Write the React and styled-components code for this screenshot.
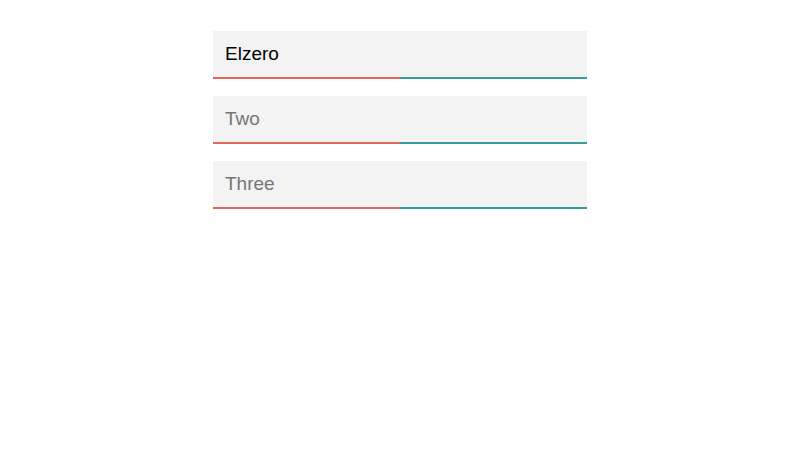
import React from 'react';
import styled, { createGlobalStyle } from 'styled-components';

const GlobalStyle = createGlobalStyle`
  html, body {
    margin: 0;
    min-height: 100%;
    background: #fff;
    font-family: "Liberation Sans", Arial, sans-serif;
  }
`;

const Form = styled.form`
  width: 374px;
  margin: 0 auto;
  padding: 31px 0 40px;
  display: flex;
  flex-direction: column;
  gap: 18px;
`;

const Field = styled.div`
  position: relative;
  display: flex;

  &::before,
  &::after {
    content: '';
    position: absolute;
    bottom: -1px;
    height: 2px;
    width: 50%;
  }

  &::before {
    left: 0;
    background: #de6a5a;
  }

  &::after {
    right: 0;
    background: #3a9b98;
  }
`;

const Input = styled.input`
  flex: 1;
  height: 47px;
  box-sizing: border-box;
  border: none;
  outline: none;
  background: #f3f3f3;
  padding: 0 12px 1px;
  font-family: "Liberation Sans", Arial, sans-serif;
  font-size: 19px;
  color: #000;

  &::placeholder {
    color: #757575;
  }
`;

const fields = [
  { id: 'one', placeholder: 'One', value: 'Elzero' },
  { id: 'two', placeholder: 'Two' },
  { id: 'three', placeholder: 'Three' },
];

export default function App() {
  return (
    <>
      <GlobalStyle />
      <Form>
        {fields.map((f) => (
          <Field key={f.id}>
            <Input type="text" placeholder={f.placeholder} defaultValue={f.value} />
          </Field>
        ))}
      </Form>
    </>
  );
}
